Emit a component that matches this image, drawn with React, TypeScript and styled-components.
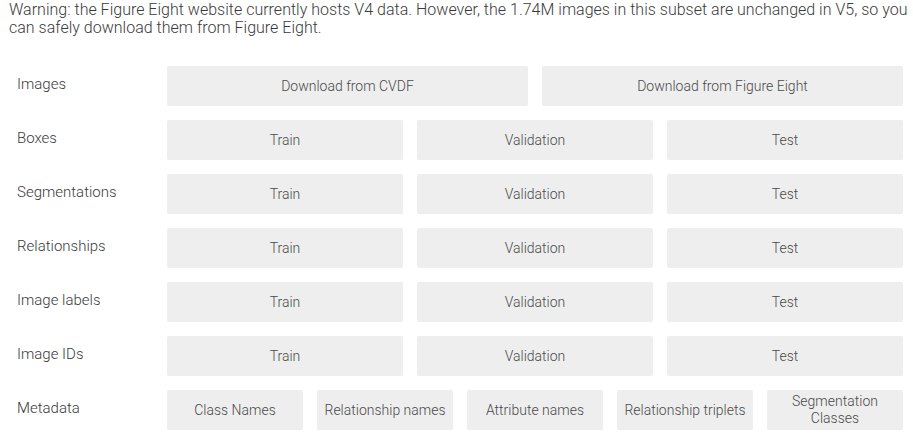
import styled, { createGlobalStyle } from "styled-components";

const GlobalStyle = createGlobalStyle`
    html, body {
        margin: 0;
        padding: 0;
        background: #fff;
        overflow: hidden;
    }
    body {
        font-family: "Roboto Light", Roboto, "Noto Sans", sans-serif;
        font-weight: 300;
        color: #333;
    }
`;

const Page = styled.div`
    width: 913px;
    padding: 0 0 0 9px;
    box-sizing: border-box;
`;

const Warning = styled.p`
    margin: 0 -12px 29px 0;
    padding: 1px 0 0 0;
    font-size: 16px;
    letter-spacing: 0.01px;
    line-height: 18px;
    color: #3a3a3a;
`;

const Table = styled.div`
    display: flex;
    flex-direction: column;
    gap: 14px;
    padding: 0 10px 0 8px;
`;

const Row = styled.div`
    display: grid;
    grid-template-columns: 150px 1fr;
    align-items: center;
`;

const Label = styled.div`
    font-size: 15px;
    color: #3a3a3a;
    margin-top: -4px;
`;

const Buttons = styled.div<{ $cols: number }>`
    display: grid;
    grid-template-columns: repeat(${p => p.$cols}, 1fr);
    gap: 14px;
`;

const Button = styled.a`
    height: 40px;
    display: flex;
    align-items: center;
    justify-content: center;
    text-align: center;
    background: #eeeeee;
    border-radius: 2px;
    font-size: 14px;
    line-height: 17px;
    color: #4a4a4a;
    text-decoration: none;
    cursor: pointer;
`;

const rows: { label: string; items: string[] }[] = [
    { label: "Images", items: ["Download from CVDF", "Download from Figure Eight"] },
    { label: "Boxes", items: ["Train", "Validation", "Test"] },
    { label: "Segmentations", items: ["Train", "Validation", "Test"] },
    { label: "Relationships", items: ["Train", "Validation", "Test"] },
    { label: "Image labels", items: ["Train", "Validation", "Test"] },
    { label: "Image IDs", items: ["Train", "Validation", "Test"] },
    {
        label: "Metadata",
        items: ["Class Names", "Relationship names", "Attribute names", "Relationship triplets", "Segmentation Classes"],
    },
];

const App = () => (
    <Page>
        <GlobalStyle />
        <Warning>
            Warning: the Figure Eight website currently hosts V4 data. However, the 1.74M images in this subset are unchanged in V5, so you can safely download them from Figure Eight.
        </Warning>
        <Table>
            {rows.map(row => (
                <Row key={row.label}>
                    <Label>{row.label}</Label>
                    <Buttons $cols={row.items.length}>
                        {row.items.map(item => (
                            <Button key={item}>{item}</Button>
                        ))}
                    </Buttons>
                </Row>
            ))}
        </Table>
    </Page>
);

export default App;
